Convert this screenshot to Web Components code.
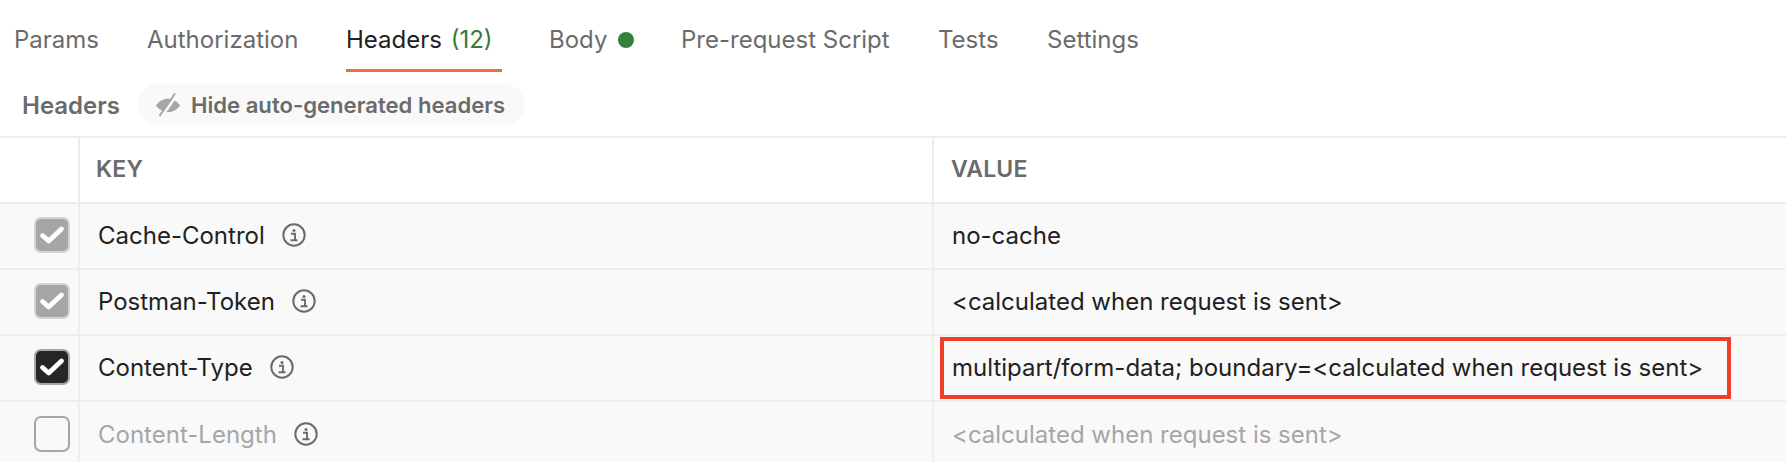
<!DOCTYPE html>
<html>
<head>
<meta charset="utf-8">
<title>Headers</title>
<style>
  html, body { margin: 0; padding: 0; background: #fff; overflow: hidden; }
  body { width: 1786px; height: 462px; font-family: Inter, "Liberation Sans", sans-serif; color: #212121; }
</style>
</head>
<body>
  <pm-tabs>
    <pm-tab style="margin-left:14px;width:133px">Params</pm-tab>
    <pm-tab style="width:199px">Authorization</pm-tab>
    <pm-tab active style="width:203px">Headers <span slot="extra" class="count">(12)</span></pm-tab>
    <pm-tab style="width:132px" dot>Body</pm-tab>
    <pm-tab style="width:257px">Pre-request Script</pm-tab>
    <pm-tab style="width:109px">Tests</pm-tab>
    <pm-tab>Settings</pm-tab>
  </pm-tabs>
  <pm-subbar></pm-subbar>
  <pm-table>
    <pm-row header key="KEY" value="VALUE"></pm-row>
    <pm-row check="muted" key="Cache-Control" value="no-cache"></pm-row>
    <pm-row check="muted" key="Postman-Token" value="&lt;calculated when request is sent&gt;"></pm-row>
    <pm-row check="on" key="Content-Type" value="multipart/form-data; boundary=&lt;calculated when request is sent&gt;" marked></pm-row>
    <pm-row check="off" disabled key="Content-Length" value="&lt;calculated when request is sent&gt;"></pm-row>
  </pm-table>

<script>
class PmTabs extends HTMLElement {
  constructor() {
    super();
    this.attachShadow({ mode: "open" });
    this.shadowRoot.innerHTML = `
      <style>
        :host { display: flex; height: 84px; box-sizing: border-box; align-items: flex-start; }
      </style>
      <slot></slot>`;
  }
}

class PmTab extends HTMLElement {
  constructor() {
    super();
    this.attachShadow({ mode: "open" });
  }
  connectedCallback() {
    const active = this.hasAttribute("active");
    const dot = this.hasAttribute("dot");
    this.shadowRoot.innerHTML = `
      <style>
        :host { display: block; box-sizing: border-box; height: 72px; flex: none; }
        .label {
          display: inline-flex; align-items: center; padding-top: 10px; box-sizing: border-box;
          font-size: 24px; font-weight: 400; color: ${active ? "#212121" : "#6b6b6b"}; white-space: pre;
          border-bottom: ${active ? "3px solid #f26b3a" : "0"}; height: ${active ? "72px" : "69px"};
          width: ${active ? "156px" : "auto"};
        }
        ::slotted(.count) { color: #2f7d3a; margin-left: 2px; }
        .dot { width: 16px; height: 16px; border-radius: 50%; background: #35803b; margin-left: 11px; }
      </style>
      <span class="label"><slot></slot><slot name="extra"></slot>${dot ? '<span class="dot"></span>' : ""}</span>`;
  }
}

class PmSubbar extends HTMLElement {
  constructor() {
    super();
    this.attachShadow({ mode: "open" });
    this.shadowRoot.innerHTML = `
      <style>
        :host { display: flex; align-items: center; height: 41px; padding-left: 22px; box-sizing: border-box; }
        .title { font-size: 24px; font-weight: 600; color: #6b6b6b; width: 115px; padding-top: 2px; }
        .pill {
          display: flex; align-items: center; gap: 10px; height: 41px; width: 388px; box-sizing: border-box;
          padding-left: 18px; border-radius: 21px; background: #f9f9f9;
          font-size: 22.1px; font-weight: 600; color: #6b6b6b; white-space: nowrap;
        }
        svg { width: 26px; height: 26px; flex: none; }
      </style>
      <span class="title">Headers</span>
      <span class="pill">
        <svg viewBox="0 0 26 26">
          <path d="M1 13.500C4.500 8.800 8.500 6.800 13 6.800s8.500 2 12 6.700c-3.500 4.700-7.500 6.700-12 6.700s-8.500-2-12-6.700z" fill="#a6a6a6"/>
          <path d="M22 3L7 24" stroke="#f9f9f9" stroke-width="2.800"/>
          <path d="M20 1.500L4.500 24" stroke="#a6a6a6" stroke-width="2"/>
        </svg>
        Hide auto-generated headers
      </span>`;
  }
}

class PmTable extends HTMLElement {
  constructor() {
    super();
    this.attachShadow({ mode: "open" });
    this.shadowRoot.innerHTML = `
      <style>
        :host { display: block; margin-top: 11px; border-top: 2px solid #ededed; }
      </style>
      <slot></slot>`;
  }
}

class PmCheck extends HTMLElement {
  constructor() {
    super();
    this.attachShadow({ mode: "open" });
  }
  connectedCallback() {
    const state = this.getAttribute("state");
    const fill = { muted: "#a6a6a6", on: "#262626", off: "transparent" }[state];
    const border = { muted: "#d4d4d4", on: "#a6a6a6", off: "#a6a6a6" }[state];
    this.shadowRoot.innerHTML = `
      <style>
        :host { display: block; width: 36px; height: 36px; box-sizing: border-box; border-radius: 7px;
          border: 2px solid ${border}; background: ${fill}; }
        svg { display: block; width: 32px; height: 32px; }
      </style>
      ${state === "off" ? "" : `<svg viewBox="0 0 32 32"><path d="M6.5 16.5l6.2 5.500L25.500 10" fill="none" stroke="#fff" stroke-width="4.800" stroke-linecap="round" stroke-linejoin="round"/></svg>`}`;
  }
}

class PmInfo extends HTMLElement {
  constructor() {
    super();
    this.attachShadow({ mode: "open" });
    this.shadowRoot.innerHTML = `
      <style>
        :host { display: inline-block; width: 24px; height: 24px; flex: none; }
        svg { display: block; width: 24px; height: 24px; }
      </style>
      <svg viewBox="0 0 24 24" fill="none">
        <circle cx="12" cy="12" r="10.700" stroke="#6b6b6b" stroke-width="2"/>
        <circle cx="12" cy="7.400" r="1.500" fill="#6b6b6b"/>
        <path d="M9 10.800h4v6.300M8.500 17.200h7" stroke="#6b6b6b" stroke-width="1.900"/>
      </svg>`;
  }
}

class PmRow extends HTMLElement {
  constructor() {
    super();
    this.attachShadow({ mode: "open" });
  }
  connectedCallback() {
    const header = this.hasAttribute("header");
    const disabled = this.hasAttribute("disabled");
    const marked = this.hasAttribute("marked");
    const key = this.getAttribute("key");
    const value = this.getAttribute("value").replace(/</g, "&lt;");
    const check = this.getAttribute("check");
    const textColor = disabled ? "#a6a6a6" : "#212121";

    this.shadowRoot.innerHTML = `
      <style>
        :host {
          display: grid; grid-template-columns: 78px 854px 1fr; height: 66px; box-sizing: border-box;
          border-bottom: 2px solid #ededed; background: ${header ? "#fff" : "#f9f9f9"};
        }
        :host(:last-child) { border-bottom: 0; }
        .cell { display: flex; align-items: center; box-sizing: border-box; border-left: 2px solid #ededed; padding-bottom: 2px; }
        .sel { justify-content: flex-end; padding-right: 8px; padding-bottom: 3px; border-left: 0; }
        .key { padding-left: ${header ? "16px" : "18px"}; gap: 17px; }
        .val { padding-left: ${header ? "17px" : "18px"}; padding-bottom: ${marked ? "0" : "2px"}; }
        .txt { font-size: 24px; color: ${textColor}; white-space: nowrap; }
        .head { font-size: 23px; font-weight: 600; color: #6b6b6b; letter-spacing: .2px; }
        .mark {
          display: flex; align-items: center; box-sizing: border-box; width: 791px; height: 62px;
          margin-left: -12px; padding-left: 8px; padding-bottom: 2px; border: 4px solid #ee4026;
        }
      </style>
      <div class="cell sel">${check ? `<pm-check state="${check}"></pm-check>` : ""}</div>
      <div class="cell key">
        <span class="${header ? "head" : "txt"}">${key}</span>
        ${header ? "" : "<pm-info></pm-info>"}
      </div>
      <div class="cell val">
        ${marked ? `<span class="mark"><span class="txt">${value}</span></span>`
                 : `<span class="${header ? "head" : "txt"}">${value}</span>`}
      </div>`;
  }
}

customElements.define("pm-tabs", PmTabs);
customElements.define("pm-tab", PmTab);
customElements.define("pm-subbar", PmSubbar);
customElements.define("pm-table", PmTable);
customElements.define("pm-check", PmCheck);
customElements.define("pm-info", PmInfo);
customElements.define("pm-row", PmRow);
</script>
</body>
</html>
